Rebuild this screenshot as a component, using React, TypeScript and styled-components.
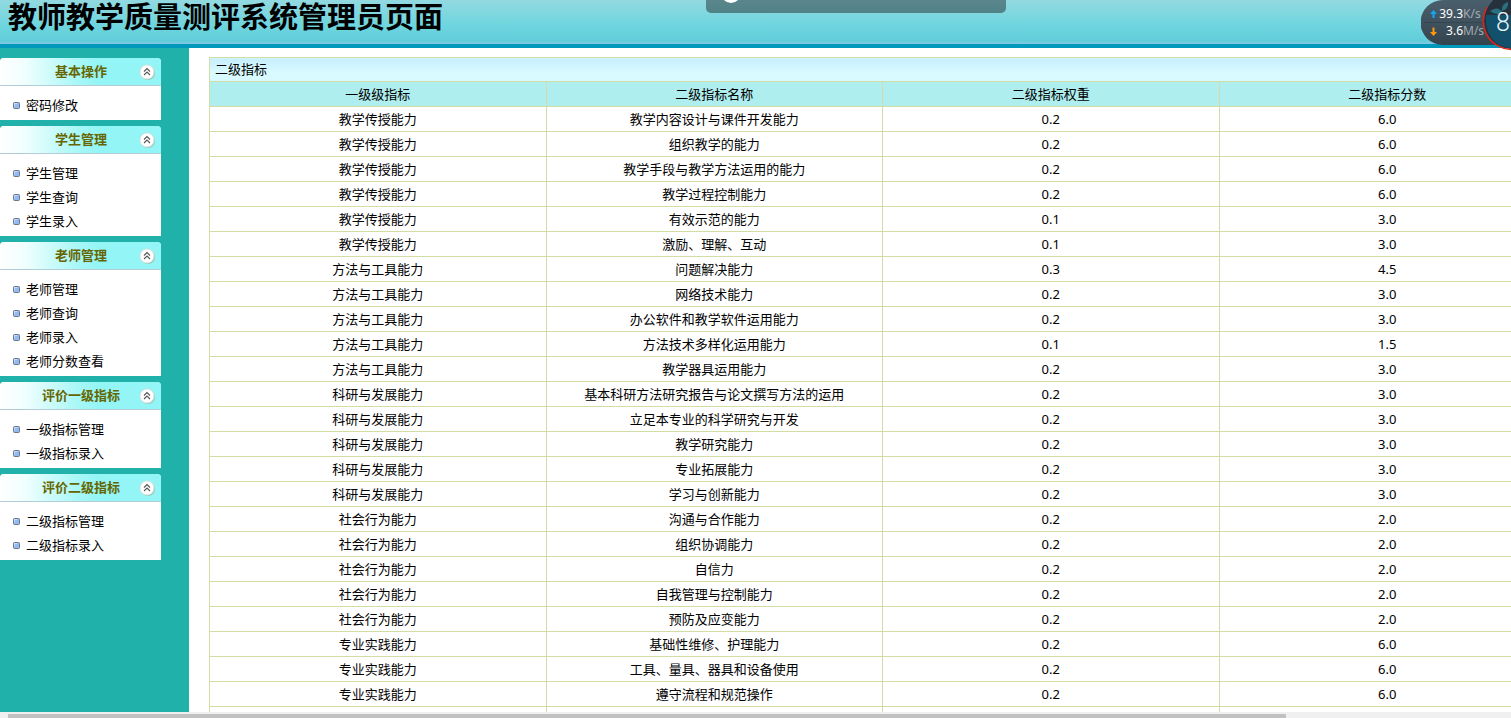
import React, { useState } from "react";
import styled, { createGlobalStyle } from "styled-components";

const GlobalStyle = createGlobalStyle`
  * { box-sizing: border-box; }
  html, body, #root { height: 100%; }
  body {
    margin: 0;
    overflow: hidden;
    background: #fff;
    color: #000;
    font: 13px/24px "Noto Sans", "Noto Sans CJK SC", sans-serif;
  }
`;

const Page = styled.div`
  display: flex;
  flex-direction: column;
  height: 100vh;
`;

const Header = styled.header`
  position: relative;
  flex: none;
  height: 48px;
  padding-left: 8px;
  background: linear-gradient(#93d9e1, #6dd5de 60%, #5fccd8);
  border-bottom: 4px solid #0099bc;
  box-shadow: inset 0 -2px 0 #7cc8e0;
`;

const Title = styled.h1`
  margin: 0;
  font-size: 29px;
  line-height: 34px;
  font-weight: 700;
  white-space: nowrap;
`;

const CaptureBar = styled.div`
  position: absolute;
  top: 0;
  left: 50%;
  width: 300px;
  height: 13px;
  margin-left: -50px;
  overflow: hidden;
  border-radius: 0 0 5px 5px;
  background: linear-gradient(#5b868b, #4e8287);
  svg { display: block; margin-left: 14px; }
`;

const SpeedWidget = styled.aside`
  position: absolute;
  z-index: 2;
  top: 0;
  right: 0;
  width: 90px;
  height: 52px;
  overflow: hidden;
  svg { position: absolute; inset: 0; }
`;

const Rates = styled.div`
  position: absolute;
  top: 5px;
  left: 8px;
  display: grid;
  grid-template-columns: 34px auto;
  color: #fff;
  font: 12px/17px "Noto Sans", sans-serif;
  text-align: right;
`;

const Unit = styled.span`
  color: #a3abb1;
  text-align: left;
`;

const Score = styled.div`
  position: absolute;
  top: 8px;
  left: 75px;
  color: #e9f3f8;
  font: 300 25px/30px Roboto, sans-serif;
`;

const Body = styled.div`
  flex: 1;
  min-height: 0;
  display: flex;
  overflow: hidden;
`;

const Sidebar = styled.nav`
  flex: none;
  width: 189px;
  padding-top: 10px;
  background: #20b2aa;
  display: flex;
  flex-direction: column;
  gap: 6px;
`;

const Group = styled.section`
  width: 161px;
  background: #fff;
  border-radius: 4px 4px 0 0;
`;

const GroupHead = styled.button`
  display: grid;
  grid-template-columns: 1fr 22px;
  align-items: center;
  width: 100%;
  height: 28px;
  padding: 0 2px 2px 25px;
  border: 0;
  border-bottom: 1px solid #b4ccd6;
  border-radius: 4px 4px 0 0;
  background: linear-gradient(90deg, #fff, #effefe 16%, #a9f7f7 48%, #93f5f5 62%);
  color: #666600;
  font: inherit;
  font-weight: 700;
  text-align: center;
  cursor: pointer;
`;

const GroupList = styled.ul`
  margin: 0;
  padding: 7px 0 3px;
  list-style: none;
`;

const GroupLink = styled.a`
  display: flex;
  align-items: center;
  gap: 6px;
  height: 24px;
  padding-left: 13px;
  color: #000;
  text-decoration: none;
`;

const Main = styled.main`
  flex: 1;
  min-width: 0;
  padding: 9px 0 0 20px;
  overflow: hidden;
`;

const Table = styled.table`
  width: calc(100% + 45px);
  table-layout: fixed;
  border-collapse: collapse;
`;

const Caption = styled.th`
  height: 24px;
  padding: 0 5px;
  border: 1px solid #d2dda5;
  background: linear-gradient(#c8eeff, #d9fbff 65%, #d6f8ff);
  font-weight: 400;
  line-height: 23px;
  text-align: left;
`;

const HeadCell = styled.th`
  height: 25px;
  padding: 0;
  border: 1px solid #d2dda5;
  background: #afeeee;
  font-weight: 400;
`;

const Cell = styled.td`
  height: 25px;
  padding: 0;
  border: 1px solid #d2dda5;
  text-align: center;
`;

const ScrollTrack = styled.div`
  flex: none;
  height: 6px;
  padding: 2px 0 0 8px;
  background: #f0f0f0;
`;

const ScrollThumb = styled.div`
  width: 85%;
  height: 4px;
  background: #c1c1c1;
`;

const groups = [
  { name: "基本操作", items: ["密码修改"] },
  { name: "学生管理", items: ["学生管理", "学生查询", "学生录入"] },
  { name: "老师管理", items: ["老师管理", "老师查询", "老师录入", "老师分数查看"] },
  { name: "评价一级指标", items: ["一级指标管理", "一级指标录入"] },
  { name: "评价二级指标", items: ["二级指标管理", "二级指标录入"] },
];

const columns = ["一级级指标", "二级指标名称", "二级指标权重", "二级指标分数"];

const rows = [
  ["教学传授能力", "教学内容设计与课件开发能力", "0.2", "6.0"],
  ["教学传授能力", "组织教学的能力", "0.2", "6.0"],
  ["教学传授能力", "教学手段与教学方法运用的能力", "0.2", "6.0"],
  ["教学传授能力", "教学过程控制能力", "0.2", "6.0"],
  ["教学传授能力", "有效示范的能力", "0.1", "3.0"],
  ["教学传授能力", "激励、理解、互动", "0.1", "3.0"],
  ["方法与工具能力", "问题解决能力", "0.3", "4.5"],
  ["方法与工具能力", "网络技术能力", "0.2", "3.0"],
  ["方法与工具能力", "办公软件和教学软件运用能力", "0.2", "3.0"],
  ["方法与工具能力", "方法技术多样化运用能力", "0.1", "1.5"],
  ["方法与工具能力", "教学器具运用能力", "0.2", "3.0"],
  ["科研与发展能力", "基本科研方法研究报告与论文撰写方法的运用", "0.2", "3.0"],
  ["科研与发展能力", "立足本专业的科学研究与开发", "0.2", "3.0"],
  ["科研与发展能力", "教学研究能力", "0.2", "3.0"],
  ["科研与发展能力", "专业拓展能力", "0.2", "3.0"],
  ["科研与发展能力", "学习与创新能力", "0.2", "3.0"],
  ["社会行为能力", "沟通与合作能力", "0.2", "2.0"],
  ["社会行为能力", "组织协调能力", "0.2", "2.0"],
  ["社会行为能力", "自信力", "0.2", "2.0"],
  ["社会行为能力", "自我管理与控制能力", "0.2", "2.0"],
  ["社会行为能力", "预防及应变能力", "0.2", "2.0"],
  ["专业实践能力", "基础性维修、护理能力", "0.2", "6.0"],
  ["专业实践能力", "工具、量具、器具和设备使用", "0.2", "6.0"],
  ["专业实践能力", "遵守流程和规范操作", "0.2", "6.0"],
  ["", "", "", ""],
];

const CollapseIcon = () => (
  <svg width="20" height="20" viewBox="0 0 20 20" aria-hidden="true">
    <circle cx="11" cy="12" r="7" fill="#8fb5a4" opacity="0.7" />
    <circle cx="10" cy="11" r="7" fill="#fff" stroke="#dde3dc" />
    <path d="M7 10.500 10 7.500 13 10.500M7 14 10 11 13 14" fill="none" stroke="#555" strokeWidth="1.1" />
  </svg>
);

const Bullet = () => (
  <svg width="7" height="7" viewBox="0 0 7 7" aria-hidden="true">
    <rect x="0.5" y="0.5" width="6" height="6" rx="1" fill="#93b9f2" stroke="#6e7788" />
    <path d="M1.5 4.500V1.500H4.500" fill="none" stroke="#c4dafc" />
  </svg>
);

function MenuGroup({ name, items }: { name: string; items: string[] }) {
  const [open, setOpen] = useState(true);
  return (
    <Group>
      <GroupHead type="button" aria-expanded={open} onClick={() => setOpen(!open)}>
        <span>{name}</span>
        <CollapseIcon />
      </GroupHead>
      {open && (
        <GroupList>
          {items.map((item) => (
            <li key={item}>
              <GroupLink href="#">
                <Bullet />
                {item}
              </GroupLink>
            </li>
          ))}
        </GroupList>
      )}
    </Group>
  );
}

function NetworkSpeed() {
  return (
    <SpeedWidget>
      <svg width="90" height="52" viewBox="0 0 90 52" aria-hidden="true">
        <defs>
          <linearGradient id="pill" x1="0" y1="0" x2="0" y2="1">
            <stop offset="0" stopColor="#4a5f6c" />
            <stop offset="1" stopColor="#34444f" />
          </linearGradient>
        </defs>
        <path d="M90 0H22A22.500 22.500 0 0 0 22 45H90Z" fill="url(#pill)" />
        <path d="M3 22.500H64" stroke="#33454f" />
        <path d="M12.500 10 16 14H13.500V18H11.500V14H9Z" fill="#18a4f2" />
        <path d="M12.500 36 16 32H13.500V27.500H11.500V32H9Z" fill="#ff9a0c" />
        <circle cx="91" cy="21" r="28" fill="#25323e" />
        <path d="M65 15H90V48Q68 46 65 23Z" fill="#12506b" />
        <path d="M69 11Q77 5 82 13Q75 16 69 11ZM81 11Q80 4 87 2Q88 9 81 11Z" fill="#2a6f80" />
        <path d="M66 7A28.500 28.500 0 0 0 90 49.500" fill="none" stroke="#e02418" strokeWidth="1.500" />
      </svg>
      <Rates>
        <span>39.3</span>
        <Unit>K/s</Unit>
        <span>3.6</span>
        <Unit>M/s</Unit>
      </Rates>
      <Score>8</Score>
    </SpeedWidget>
  );
}

export default function App() {
  return (
    <Page>
      <GlobalStyle />
      <Header>
        <Title>教师教学质量测评系统管理员页面</Title>
        <CaptureBar>
          <svg width="24" height="4" viewBox="0 0 24 4" aria-hidden="true">
            <circle cx="11" cy="-7" r="10" fill="#fff" />
          </svg>
        </CaptureBar>
        <NetworkSpeed />
      </Header>
      <Body>
        <Sidebar>
          {groups.map((group) => (
            <MenuGroup key={group.name} {...group} />
          ))}
        </Sidebar>
        <Main>
          <Table>
            <thead>
              <tr>
                <Caption colSpan={4}>二级指标</Caption>
              </tr>
              <tr>
                {columns.map((column) => (
                  <HeadCell key={column} scope="col">{column}</HeadCell>
                ))}
              </tr>
            </thead>
            <tbody>
              {rows.map((row, index) => (
                <tr key={index}>
                  {row.map((value, column) => (
                    <Cell key={column}>{value}</Cell>
                  ))}
                </tr>
              ))}
            </tbody>
          </Table>
        </Main>
      </Body>
      <ScrollTrack>
        <ScrollThumb />
      </ScrollTrack>
    </Page>
  );
}
